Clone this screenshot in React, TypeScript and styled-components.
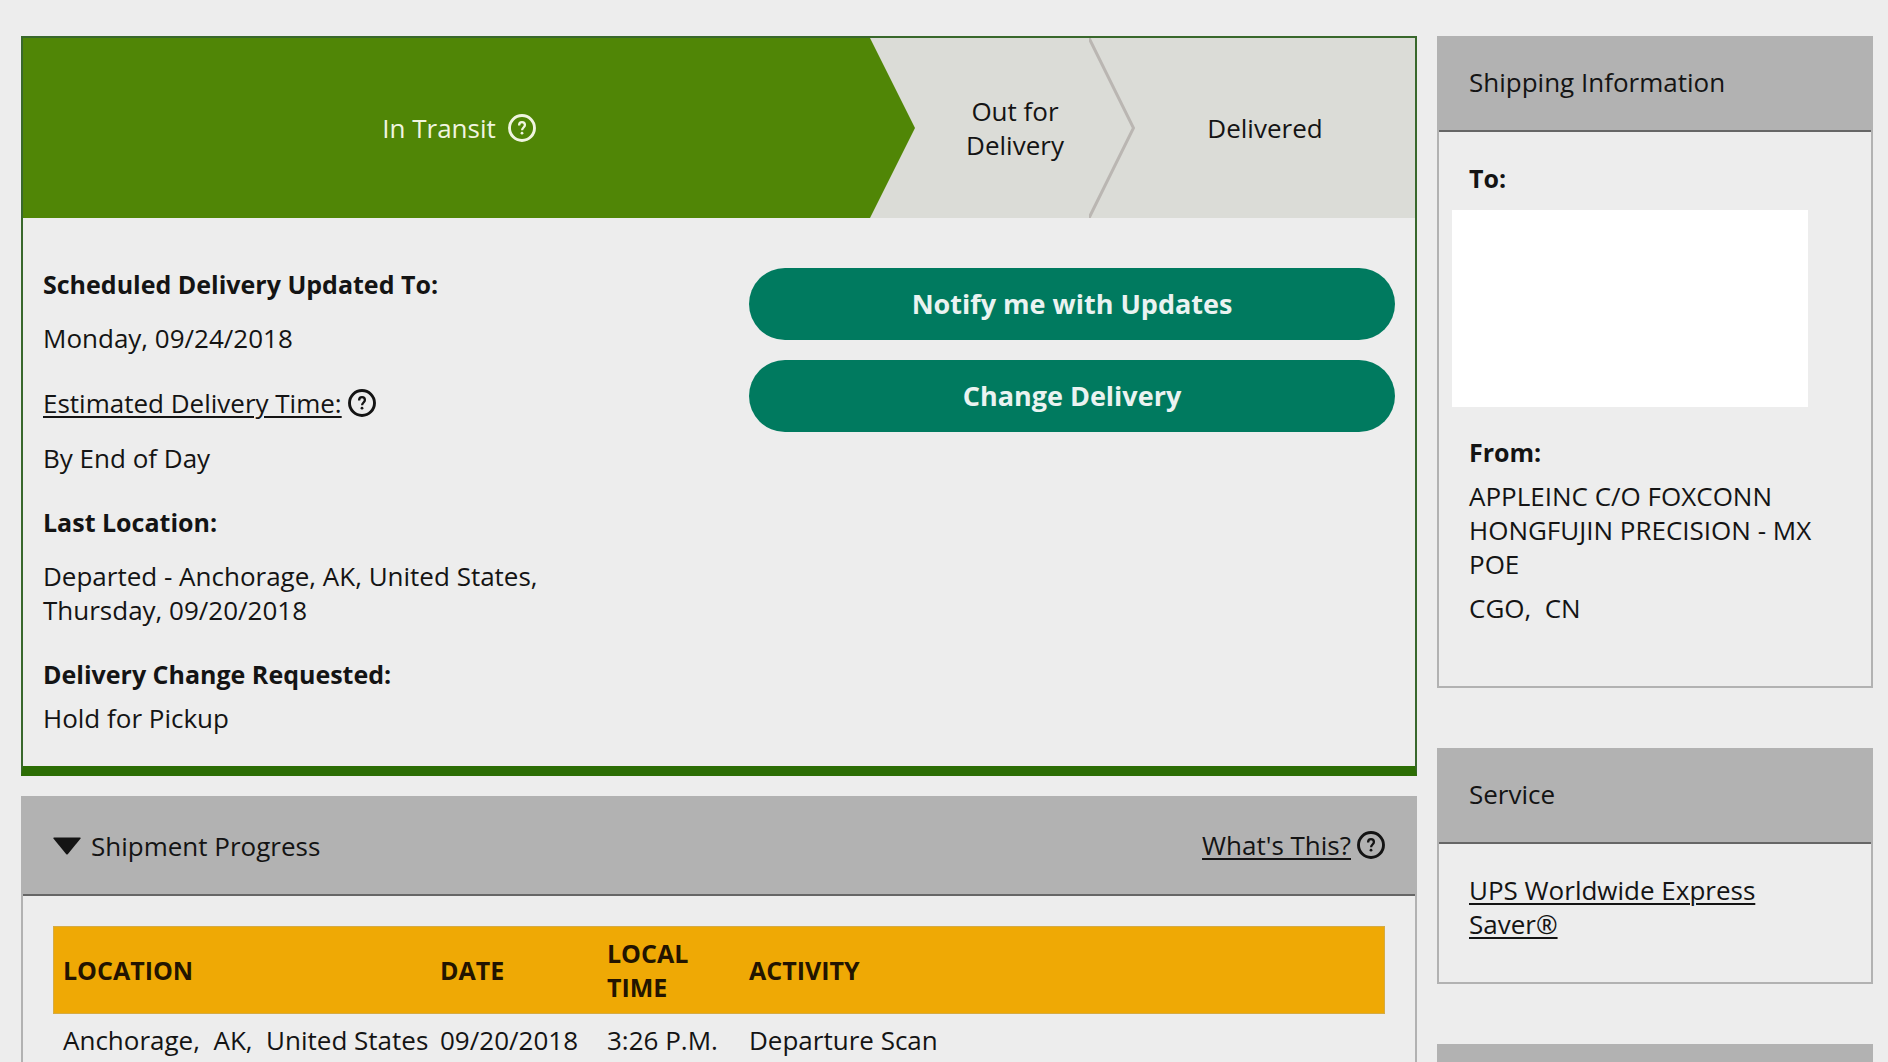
import React from "react";
import styled, { createGlobalStyle } from "styled-components";

const ink = "#141414";
const silver = "#b2b2b2";
const page = "#ededed";

const GlobalStyle = createGlobalStyle`
  *, *::before, *::after { box-sizing: border-box; }
  body {
    margin: 0;
    background: ${page};
    color: ${ink};
    font-family: "Open Sans", "Noto Sans", sans-serif;
    font-size: 26px;
    line-height: 34px;
  }
  h2, h3, p, ol { margin: 0; padding: 0; font: inherit; }
`;

const Page = styled.div`
  display: grid;
  grid-template-columns: minmax(0, 1fr) 436px;
  gap: 20px;
  padding: 36px 15px 0 21px;
`;

const Main = styled.main`
  display: flex;
  flex-direction: column;
  gap: 20px;
`;

const Sidebar = styled.aside`
  display: flex;
  flex-direction: column;
  gap: 60px;
`;

const StatusCard = styled.section`
  border: 2px solid #39682c;
  border-bottom: 10px solid #2c6d04;
`;

const Stages = styled.ol`
  display: grid;
  grid-template-columns: 892fr 220fr 280fr;
  height: 180px;
  background: #dbdcd7;
  list-style: none;
`;

const Stage = styled.li<{ $active?: boolean }>`
  position: relative;
  display: flex;
  align-items: center;
  justify-content: center;
  gap: 12px;
  padding: 0 50px 0 30px;
  text-align: center;
  ${({ $active }) =>
    $active &&
    `
    background: #508606;
    color: #f0f5e0;
    clip-path: polygon(0 0, calc(100% - 45px) 0, 100% 50%, calc(100% - 45px) 100%, 0 100%);
  `}
`;

const StageDivider = styled.svg`
  position: absolute;
  top: 0;
  right: 0;
  width: 46px;
  height: 100%;
`;

const StatusBody = styled.div`
  display: grid;
  grid-template-columns: minmax(0, 706fr) minmax(0, 646fr);
  padding: 49px 20px 31px;
`;

const Facts = styled.div`
  display: flex;
  flex-direction: column;
  gap: 30px;
  padding-right: 160px;
`;

const Fact = styled.div<{ $tight?: boolean }>`
  display: flex;
  flex-direction: column;
  gap: ${({ $tight }) => ($tight ? 10 : 20)}px;
`;

const Label = styled.h3`
  font-size: 25px;
  font-weight: 700;
`;

const HelpRow = styled.div`
  display: flex;
  align-items: center;
  gap: 6px;
  min-height: 36px;
`;

const TextLink = styled.a`
  color: inherit;
  text-decoration: underline;
  text-decoration-thickness: 2px;
  text-underline-offset: 3px;
`;

const IconButton = styled.button`
  display: flex;
  padding: 0;
  border: 0;
  background: none;
  color: inherit;
  cursor: pointer;
`;

const Actions = styled.div`
  display: flex;
  flex-direction: column;
  gap: 20px;
  padding-top: 1px;
`;

const PillButton = styled.button`
  height: 72px;
  border: 0;
  border-radius: 36px;
  background: #007a5f;
  color: #eaf3f1;
  font: 700 27px/34px "Open Sans", "Noto Sans", sans-serif;
  cursor: pointer;
`;

const Card = styled.section`
  border: 2px solid ${silver};
`;

const CardHeader = styled.header<{ $wide?: boolean }>`
  display: flex;
  align-items: flex-start;
  justify-content: space-between;
  padding: ${({ $wide }) => ($wide ? "29px 30px 29px" : "27px 30px 31px")};
  border-bottom: 2px solid #666;
  background: ${silver};
`;

const SideBody = styled.div`
  padding: 29px 30px 41px;
`;

const Redacted = styled.div`
  width: 356px;
  max-width: 100%;
  height: 197px;
  margin: 15px 0 28px -17px;
  background: #fff;
`;

const Address = styled.div`
  display: flex;
  flex-direction: column;
  gap: 10px;
  padding-bottom: 20px;
  white-space: pre-wrap;
`;

const Toggle = styled.button`
  display: flex;
  align-items: center;
  gap: 10px;
  min-height: 38px;
  padding: 0;
  border: 0;
  background: none;
  color: inherit;
  font: inherit;
  cursor: pointer;
`;

const ProgressBody = styled.div`
  padding: 30px;
`;

const Table = styled.table`
  width: 100%;
  border-collapse: collapse;
  table-layout: fixed;
  text-align: left;
`;

const HeadRow = styled.tr`
  background: #efa905;
  color: #231400;
  outline: 1px solid #d5ab45;
  outline-offset: -1px;
`;

const Th = styled.th<{ $width?: number }>`
  width: ${({ $width }) => ($width ? `${$width}px` : "auto")};
  padding: 10px;
  font-size: 25px;
  font-weight: 700;
`;

const Td = styled.td`
  padding: 9px 0 9px 10px;
  white-space: pre;
`;

function HelpIcon() {
  return (
    <svg width="28" height="28" viewBox="0 0 28 28" fill="none" stroke="currentColor" aria-hidden="true">
      <circle cx="14" cy="14" r="12.5" strokeWidth="2.9" />
      <path d="M11.1 11.4c0-2.1 1.2-3.3 2.9-3.3s2.9 1.1 2.9 2.9c0 2.4-2.8 2.6-2.8 5.2" strokeWidth="2.3" />
      <circle cx="14" cy="19.2" r="1.4" fill="currentColor" stroke="none" />
    </svg>
  );
}

function Help({ topic }: { topic: string }) {
  return (
    <IconButton type="button" aria-label={topic}>
      <HelpIcon />
    </IconButton>
  );
}

const scans = [
  { location: "Anchorage,  AK,  United States", date: "09/20/2018", time: "3:26 P.M.", activity: "Departure Scan" },
];

export default function App() {
  return (
    <>
      <GlobalStyle />
      <Page>
        <Main>
          <StatusCard>
            <Stages>
              <Stage $active>
                In Transit
                <Help topic="In Transit" />
              </Stage>
              <Stage>
                Out for Delivery
                <StageDivider viewBox="0 0 46 180" preserveAspectRatio="none" aria-hidden="true">
                  <path d="M0 0L44.5 90L0 180" fill="none" stroke="#bab6b2" strokeWidth="3" />
                </StageDivider>
              </Stage>
              <Stage>Delivered</Stage>
            </Stages>
            <StatusBody>
              <Facts>
                <Fact>
                  <Label>Scheduled Delivery Updated To:</Label>
                  <p>Monday, 09/24/2018</p>
                </Fact>
                <Fact>
                  <HelpRow>
                    <TextLink href="#delivery-time">Estimated Delivery Time:</TextLink>
                    <Help topic="Estimated Delivery Time" />
                  </HelpRow>
                  <p>By End of Day</p>
                </Fact>
                <Fact>
                  <Label>Last Location:</Label>
                  <p>Departed - Anchorage, AK, United States, Thursday, 09/20/2018</p>
                </Fact>
                <Fact $tight>
                  <Label>Delivery Change Requested:</Label>
                  <p>Hold for Pickup</p>
                </Fact>
              </Facts>
              <Actions>
                <PillButton type="button">Notify me with Updates</PillButton>
                <PillButton type="button">Change Delivery</PillButton>
              </Actions>
            </StatusBody>
          </StatusCard>

          <Card>
            <CardHeader $wide>
              <h2>
                <Toggle type="button" aria-expanded="true">
                  <svg width="28" height="18" viewBox="0 0 28 18" aria-hidden="true">
                    <path d="M1 0.5H27Q28.4 0.5 27.4 1.8L14.7 17.2Q14 18 13.3 17.2L0.6 1.8Q-0.4 0.5 1 0.5Z" fill="currentColor" />
                  </svg>
                  Shipment Progress
                </Toggle>
              </h2>
              <HelpRow>
                <TextLink href="#progress-help">What's This?</TextLink>
                <Help topic="About shipment progress" />
              </HelpRow>
            </CardHeader>
            <ProgressBody>
              <Table>
                <thead>
                  <HeadRow>
                    <Th $width={377}>LOCATION</Th>
                    <Th $width={167}>DATE</Th>
                    <Th $width={142}>LOCAL TIME</Th>
                    <Th>ACTIVITY</Th>
                  </HeadRow>
                </thead>
                <tbody>
                  {scans.map((scan) => (
                    <tr key={scan.date + scan.time}>
                      <Td>{scan.location}</Td>
                      <Td>{scan.date}</Td>
                      <Td>{scan.time}</Td>
                      <Td>{scan.activity}</Td>
                    </tr>
                  ))}
                </tbody>
              </Table>
            </ProgressBody>
          </Card>
        </Main>

        <Sidebar>
          <Card>
            <CardHeader>
              <h2>Shipping Information</h2>
            </CardHeader>
            <SideBody>
              <Label>To:</Label>
              <Redacted />
              <Address>
                <Label>From:</Label>
                <p>APPLEINC C/O FOXCONN HONGFUJIN PRECISION - MX POE</p>
                <p>{"CGO,  CN"}</p>
              </Address>
            </SideBody>
          </Card>
          <Card>
            <CardHeader>
              <h2>Service</h2>
            </CardHeader>
            <SideBody>
              <TextLink href="#service">UPS Worldwide Express Saver®</TextLink>
            </SideBody>
          </Card>
          <Card>
            <CardHeader />
          </Card>
        </Sidebar>
      </Page>
    </>
  );
}
